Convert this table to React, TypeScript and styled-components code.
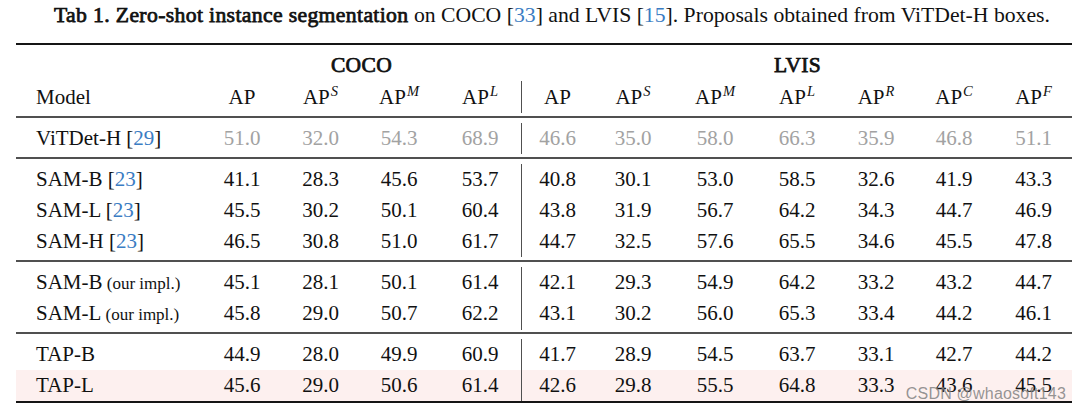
import styled, { createGlobalStyle } from 'styled-components';

const GlobalStyle = createGlobalStyle`
  html, body {
    margin: 0;
    padding: 0;
    background: #ffffff;
  }
`;

const cols = '186px 80px 77px 80px 82px 72px 80px 84px 80px 78px 78px 81px';

const Page = styled.div`
  position: relative;
  width: 1080px;
  height: 409px;
  overflow: hidden;
  background: #ffffff;
  font-family: 'Liberation Serif', 'Times New Roman', serif;
  color: #111;
`;

const Caption = styled.p`
  margin: 3px 0 0;
  padding-left: 24px;
  line-height: 24px;
  font-size: 21.7px;
  text-align: center;
  white-space: nowrap;
`;

const Strong = styled.span`
  font-weight: 400;
  -webkit-text-stroke: 0.75px currentColor;
  letter-spacing: 0.35px;
`;

const Cite = styled.span`
  color: #3a7cc3;
`;

const Table = styled.div`
  margin: 16px 0 0 16px;
  width: 1056px;
  border-top: 2px solid #151515;
  border-bottom: 2px solid #151515;
  font-size: 21px;
`;

const Group = styled.div<{ $head?: boolean; $last?: boolean }>`
  border-top: ${(p) => (p.$head ? 'none' : '2px solid #505050')};
  padding: ${(p) => (p.$head ? '4px 0 3px' : p.$last ? '5px 0 0' : '5px 0 3px')};
`;

const Row = styled.div<{ $tall?: boolean; $highlight?: boolean }>`
  display: grid;
  grid-template-columns: ${cols};
  height: ${(p) => (p.$tall ? 32 : 31)}px;
  line-height: ${(p) => (p.$tall ? 32 : 31)}px;
  background: ${(p) => (p.$highlight ? '#fdf0ef' : 'transparent')};
`;

const Cell = styled.div<{ $divider?: boolean; $muted?: boolean }>`
  text-align: center;
  white-space: nowrap;
  color: ${(p) => (p.$muted ? '#a2a2a2' : '#111')};
  border-left: ${(p) => (p.$divider ? '1px solid #505050' : 'none')};
`;

const ModelCell = styled.div`
  padding-left: 20px;
  white-space: nowrap;
`;

const Small = styled.span`
  font-size: 17px;
`;

const GroupTitle = styled(Strong)<{ $span: string }>`
  grid-column: ${(p) => p.$span};
  text-align: center;
  font-size: 21.5px;
`;

const Sup = styled.sup`
  font-size: 14.5px;
  font-style: italic;
  line-height: 0;
  vertical-align: 8px;
  margin-left: 1px;
`;

const Watermark = styled.div`
  position: absolute;
  right: 14px;
  top: 385px;
  font-family: 'Liberation Sans', Arial, sans-serif;
  font-size: 16px;
  color: rgba(130, 130, 130, 0.85);
  letter-spacing: 0.2px;
  pointer-events: none;
`;

type Metric = { label: string; sup?: string };

const coco: Metric[] = [
  { label: 'AP' },
  { label: 'AP', sup: 'S' },
  { label: 'AP', sup: 'M' },
  { label: 'AP', sup: 'L' },
];

const lvis: Metric[] = [
  { label: 'AP' },
  { label: 'AP', sup: 'S' },
  { label: 'AP', sup: 'M' },
  { label: 'AP', sup: 'L' },
  { label: 'AP', sup: 'R' },
  { label: 'AP', sup: 'C' },
  { label: 'AP', sup: 'F' },
];

type Entry = {
  name: string;
  cite?: string;
  note?: string;
  values: string[];
  muted?: boolean;
  highlight?: boolean;
};

const groups: Entry[][] = [
  [
    {
      name: 'ViTDet-H',
      cite: '29',
      muted: true,
      values: ['51.0', '32.0', '54.3', '68.9', '46.6', '35.0', '58.0', '66.3', '35.9', '46.8', '51.1'],
    },
  ],
  [
    {
      name: 'SAM-B',
      cite: '23',
      values: ['41.1', '28.3', '45.6', '53.7', '40.8', '30.1', '53.0', '58.5', '32.6', '41.9', '43.3'],
    },
    {
      name: 'SAM-L',
      cite: '23',
      values: ['45.5', '30.2', '50.1', '60.4', '43.8', '31.9', '56.7', '64.2', '34.3', '44.7', '46.9'],
    },
    {
      name: 'SAM-H',
      cite: '23',
      values: ['46.5', '30.8', '51.0', '61.7', '44.7', '32.5', '57.6', '65.5', '34.6', '45.5', '47.8'],
    },
  ],
  [
    {
      name: 'SAM-B',
      note: '(our impl.)',
      values: ['45.1', '28.1', '50.1', '61.4', '42.1', '29.3', '54.9', '64.2', '33.2', '43.2', '44.7'],
    },
    {
      name: 'SAM-L',
      note: '(our impl.)',
      values: ['45.8', '29.0', '50.7', '62.2', '43.1', '30.2', '56.0', '65.3', '33.4', '44.2', '46.1'],
    },
  ],
  [
    {
      name: 'TAP-B',
      values: ['44.9', '28.0', '49.9', '60.9', '41.7', '28.9', '54.5', '63.7', '33.1', '42.7', '44.2'],
    },
    {
      name: 'TAP-L',
      highlight: true,
      values: ['45.6', '29.0', '50.6', '61.4', '42.6', '29.8', '55.5', '64.8', '33.3', '43.6', '45.5'],
    },
  ],
];

const MetricLabel = ({ metric }: { metric: Metric }) => (
  <>
    {metric.label}
    {metric.sup && <Sup>{metric.sup}</Sup>}
  </>
);

const App = (): JSX.Element => {
  return (
    <Page>
      <GlobalStyle />
      <Caption>
        <Strong>Tab 1. Zero-shot instance segmentation</Strong> on COCO [<Cite>33</Cite>] and LVIS [
        <Cite>15</Cite>]. Proposals obtained from ViTDet-H boxes.
      </Caption>
      <Table>
        <Group $head>
          <Row $tall>
            <GroupTitle $span='2 / 6'>COCO</GroupTitle>
            <GroupTitle $span='6 / 13'>LVIS</GroupTitle>
          </Row>
          <Row $tall>
            <ModelCell>Model</ModelCell>
            {coco.map((m, i) => (
              <Cell key={`c${i}`}>
                <MetricLabel metric={m} />
              </Cell>
            ))}
            {lvis.map((m, i) => (
              <Cell key={`l${i}`} $divider={i === 0}>
                <MetricLabel metric={m} />
              </Cell>
            ))}
          </Row>
        </Group>
        {groups.map((rows, g) => (
          <Group key={g} $last={g === groups.length - 1}>
            {rows.map((r) => (
              <Row key={r.name + (r.note ?? '')} $highlight={r.highlight}>
                <ModelCell>
                  {r.name}
                  {r.cite && (
                    <>
                      {' '}[<Cite>{r.cite}</Cite>]
                    </>
                  )}
                  {r.note && <Small> {r.note}</Small>}
                </ModelCell>
                {r.values.map((v, i) => (
                  <Cell key={i} $divider={i === 4} $muted={r.muted}>
                    {v}
                  </Cell>
                ))}
              </Row>
            ))}
          </Group>
        ))}
      </Table>
      <Watermark>CSDN @whaosoft143</Watermark>
    </Page>
  );
};

export default App;
